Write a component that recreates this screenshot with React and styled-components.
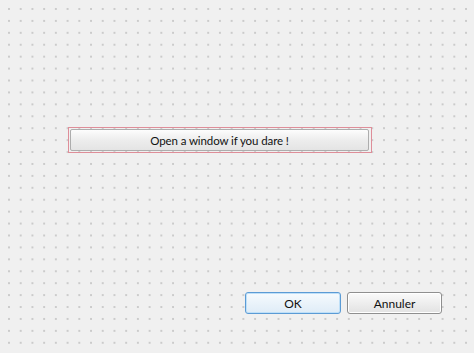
import React from 'react'
import styled, {createGlobalStyle} from 'styled-components'

const Global = createGlobalStyle`
  html, body {
    margin: 0;
    padding: 0;
    background-color: #f0f0f0;
  }
  body {
    font-family: Lato, "Open Sans", sans-serif;
  }
`

const Canvas = styled.div`
  width: 474px;
  height: 353px;
  display: flex;
  flex-direction: column;
  box-sizing: border-box;
  background-color: #f0f0f0;
  background-image: radial-gradient(circle, #b4b4b4 0.5px, rgba(0, 0, 0, 0) 1px);
  background-size: 11.72px 11.93px;
  background-position: 3.14px 3.03px;
`

const LayoutFrame = styled.div`
  width: 304px;
  height: 26px;
  margin: 127px 0 0 68px;
  box-sizing: border-box;
  border: 1px solid #de8e99;
  padding: 1px 2px 1px 1px;
  display: flex;
`

const PushButton = styled.button`
  flex: 1;
  margin: 0;
  padding: 0;
  box-sizing: border-box;
  border: 1px solid #adadad;
  border-radius: 2px;
  background: linear-gradient(#fdfdfd, #ededed 50%, #e4e4e4);
  font-family: inherit;
  font-size: 11.5px;
  letter-spacing: -0.1px;
  color: #111;
  display: flex;
  align-items: center;
  justify-content: center;
`

const Spacer = styled.div`
  flex: 1;
`

const DialogButtons = styled.div`
  display: flex;
  justify-content: flex-end;
  gap: 6px;
  padding: 0 32px 39px 0;
`

const DialogButton = styled.button`
  width: ${p => p.w || '96px'};
  height: 22px;
  margin: 0;
  padding: 0;
  box-sizing: border-box;
  border: 1px solid ${p => (p.primary ? '#5b9bd5' : '#8f8f8f')};
  border-radius: 3px;
  box-shadow: ${p => (p.primary ? 'inset 0 0 0 1px #bfe0f8' : 'inset 0 0 0 1px #ffffff')};
  background: ${p => (p.primary
    ? 'linear-gradient(#f6fbfe, #eaf3fa 50%, #dfecf7)'
    : 'linear-gradient(#fafafa, #eeeeee 50%, #e2e2e2)')};
  font-family: inherit;
  font-size: 12px;
  color: #111;
`

const App = () => (
  <>
    <Global />
    <Canvas>
      <LayoutFrame>
        <PushButton>Open a window if you dare !</PushButton>
      </LayoutFrame>
      <Spacer />
      <DialogButtons>
        <DialogButton primary>OK</DialogButton>
        <DialogButton w='95px'>Annuler</DialogButton>
      </DialogButtons>
    </Canvas>
  </>
)

export default App
